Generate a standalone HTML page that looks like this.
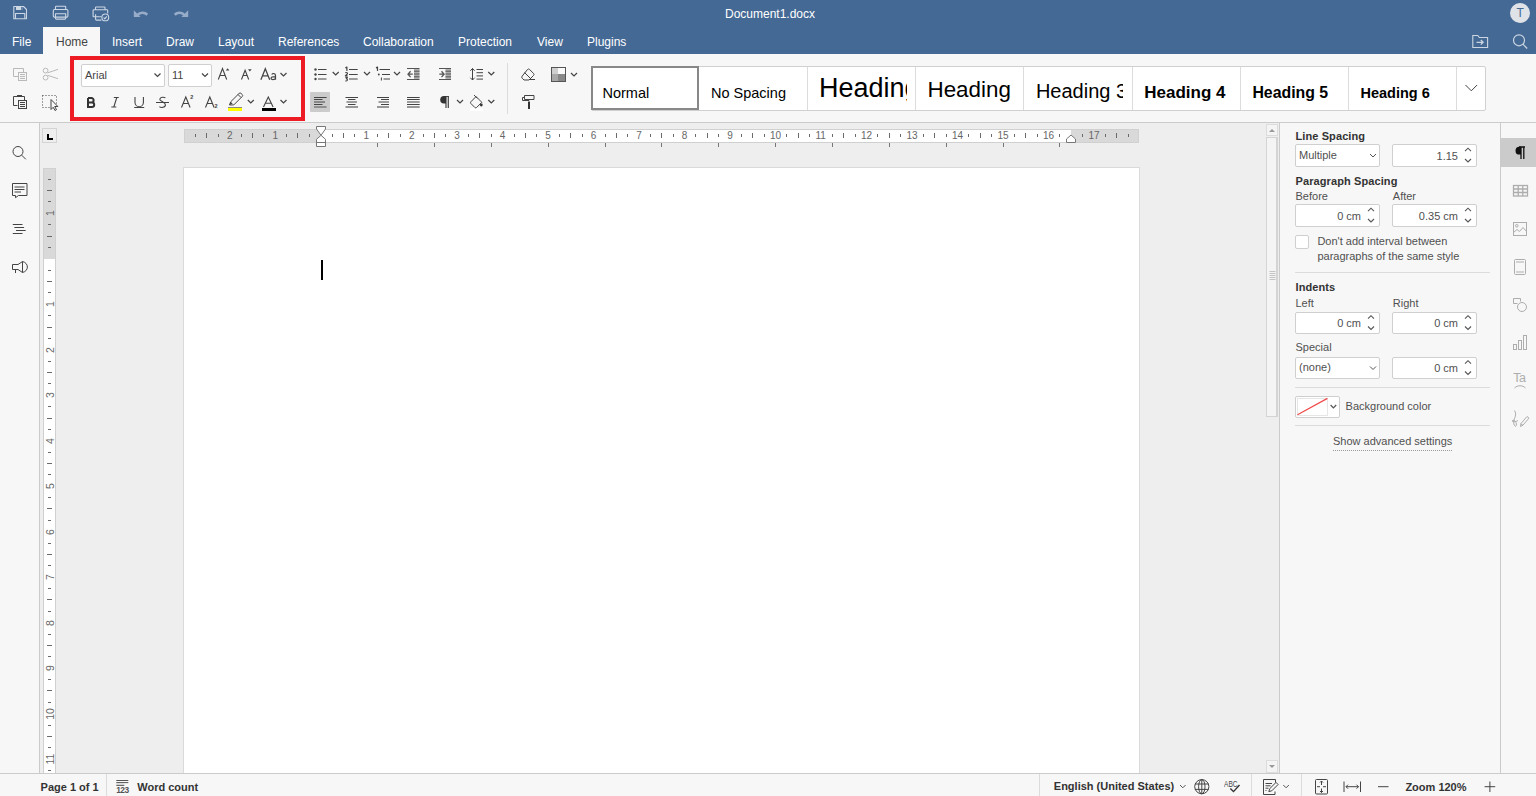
<!DOCTYPE html>
<html><head><meta charset="utf-8">
<style>
*{margin:0;padding:0;box-sizing:border-box}
html,body{width:1536px;height:796px;overflow:hidden;background:#eeeeee;font-family:"Liberation Sans",sans-serif;color:#444}
.a{position:absolute}
.t{position:absolute;white-space:nowrap;line-height:1}
</style></head><body>
<div class="a" style="left:0px;top:0px;width:1536px;height:54px;background:#446995"></div>
<div class="a" style="left:0px;top:54px;width:1536px;height:68px;background:#f7f7f7"></div>
<div class="a" style="left:0px;top:122px;width:1536px;height:1px;background:#cbcbcb"></div>
<div class="a" style="left:0px;top:123px;width:39px;height:650px;background:#f7f7f7"></div>
<div class="a" style="left:39px;top:123px;width:1px;height:650px;background:#cbcbcb"></div>
<div class="a" style="left:1280px;top:123px;width:220px;height:650px;background:#f7f7f7"></div>
<div class="a" style="left:1279px;top:123px;width:1px;height:650px;background:#cbcbcb"></div>
<div class="a" style="left:1501px;top:123px;width:35px;height:650px;background:#f7f7f7"></div>
<div class="a" style="left:1500px;top:123px;width:1px;height:650px;background:#cbcbcb"></div>
<div class="a" style="left:0px;top:774px;width:1536px;height:22px;background:#f7f7f7"></div>
<div class="a" style="left:0px;top:773px;width:1536px;height:1px;background:#cbcbcb"></div>
<div class="t" style="left:725px;top:7.64px;font-size:12px;color:#fff;">Document1.docx</div>
<div class="a" style="left:1510px;top:3px;width:20px;height:20px;background:#dfe3e8;border-radius:50%"></div>
<div class="t" style="left:1516.5px;top:7.34px;font-size:12px;color:#446995;">T</div>
<div class="a" style="left:43px;top:27px;width:57px;height:27px;background:#f7f7f7"></div>
<div class="t" style="left:12px;top:36.24px;font-size:12px;color:#fff;">File</div>
<div class="t" style="left:56px;top:36.24px;font-size:12px;color:#444;">Home</div>
<div class="t" style="left:112px;top:36.24px;font-size:12px;color:#fff;">Insert</div>
<div class="t" style="left:166px;top:36.24px;font-size:12px;color:#fff;">Draw</div>
<div class="t" style="left:218px;top:36.24px;font-size:12px;color:#fff;">Layout</div>
<div class="t" style="left:278px;top:36.24px;font-size:12px;color:#fff;">References</div>
<div class="t" style="left:363px;top:36.24px;font-size:12px;color:#fff;">Collaboration</div>
<div class="t" style="left:458px;top:36.24px;font-size:12px;color:#fff;">Protection</div>
<div class="t" style="left:537px;top:36.24px;font-size:12px;color:#fff;">View</div>
<div class="t" style="left:587px;top:36.24px;font-size:12px;color:#fff;">Plugins</div>
<div class="a" style="left:70px;top:56px;width:235px;height:65px;border:4px solid #ed1c24"></div>
<div class="a" style="left:81px;top:64px;width:84px;height:23px;background:#fff;border:1px solid #cfcfcf;border-radius:2px"></div>
<div class="t" style="left:85px;top:69.69px;font-size:11px;color:#444;">Arial</div>
<div class="a" style="left:168px;top:64px;width:44px;height:23px;background:#fff;border:1px solid #cfcfcf;border-radius:2px"></div>
<div class="t" style="left:172px;top:69.69px;font-size:11px;color:#444;">11</div>
<div class="a" style="left:310px;top:92px;width:20px;height:20px;background:#cbcbcb;border-radius:1px"></div>
<div class="a" style="left:507px;top:63px;width:1px;height:51px;background:#dcdcdc"></div>
<div class="a" style="left:591px;top:66px;width:895px;height:45px;background:#fff;border:1px solid #d0d0d0;border-radius:2px"></div>
<div class="a" style="left:591px;top:66px;width:108px;height:44px;border:2px solid #888"></div>
<div class="a" style="left:807px;top:67px;width:1px;height:43px;background:#dcdcdc"></div>
<div class="a" style="left:915px;top:67px;width:1px;height:43px;background:#dcdcdc"></div>
<div class="a" style="left:1023px;top:67px;width:1px;height:43px;background:#dcdcdc"></div>
<div class="a" style="left:1132px;top:67px;width:1px;height:43px;background:#dcdcdc"></div>
<div class="a" style="left:1240px;top:67px;width:1px;height:43px;background:#dcdcdc"></div>
<div class="a" style="left:1348px;top:67px;width:1px;height:43px;background:#dcdcdc"></div>
<div class="a" style="left:1456px;top:67px;width:1px;height:43px;background:#dcdcdc"></div>
<div class="t" style="left:602.5px;top:85.53px;font-size:14.5px;color:#000;">Normal</div>
<div class="t" style="left:711px;top:85.53px;font-size:14.5px;color:#000;">No Spacing</div>
<div class="a" style="left:808px;top:67px;width:99px;height:42px;overflow:hidden">
<div class="t" style="left:11.0px;top:8.24px;font-size:27px;color:#000;">Heading 1</div>
</div>
<div class="t" style="left:927.5px;top:79.14px;font-size:22.4px;color:#000;">Heading</div>
<div class="a" style="left:1024px;top:67px;width:99px;height:42px;overflow:hidden">
<div class="t" style="left:11.9px;top:13.97px;font-size:20px;color:#000;">Heading 3</div>
</div>
<div class="t" style="left:1144.3px;top:83.51px;font-size:17px;color:#000;font-weight:bold;">Heading 4</div>
<div class="t" style="left:1252.4px;top:85.18px;font-size:15.85px;color:#000;font-weight:bold;">Heading 5</div>
<div class="t" style="left:1360.5px;top:86.13px;font-size:14.5px;color:#000;font-weight:bold;">Heading 6</div>
<div class="t" style="left:190.3px;top:95.04px;font-size:5.5px;color:#444;font-weight:bold;">2</div>
<div class="t" style="left:214.6px;top:103.54px;font-size:5.5px;color:#444;font-weight:bold;">2</div>
<div class="a" style="left:228px;top:108px;width:14px;height:3px;background:#ffff00"></div>
<div class="a" style="left:228px;top:107px;width:14px;height:1px;background:#888"></div>
<div class="a" style="left:262px;top:108px;width:14px;height:3px;background:#000"></div>
<div class="a" style="left:470px;top:108px;width:13px;height:3px;background:#fff"></div>
<div class="a" style="left:551px;top:67px;width:15px;height:15px;border:1px solid #555;background:linear-gradient(#fff,#fff)"></div>
<div class="a" style="left:552px;top:68px;width:6px;height:6px;background:#cfcfcf"></div>
<div class="a" style="left:558px;top:68px;width:7px;height:6px;background:#fafafa"></div>
<div class="a" style="left:552px;top:74px;width:6px;height:7px;background:#a9a9a9"></div>
<div class="a" style="left:558px;top:74px;width:7px;height:7px;background:#888"></div>
<div class="a" style="left:42px;top:128px;width:15px;height:15px;border:1px solid #d4d4d4;background:#eeeeee"></div>
<div class="a" style="left:184px;top:129px;width:955px;height:14px;background:#d9d9d9;border:1px solid #d0d0d0"></div>
<div class="a" style="left:321px;top:130px;width:750px;height:12px;background:#fff"></div>
<div class="t" style="left:226.91999999999996px;top:130.94px;font-size:10px;color:#666;">2</div>
<div class="t" style="left:272.40999999999997px;top:130.94px;font-size:10px;color:#666;">1</div>
<div class="t" style="left:363.39px;top:130.94px;font-size:10px;color:#666;">1</div>
<div class="t" style="left:408.88px;top:130.94px;font-size:10px;color:#666;">2</div>
<div class="t" style="left:454.36999999999995px;top:130.94px;font-size:10px;color:#666;">3</div>
<div class="t" style="left:499.85999999999996px;top:130.94px;font-size:10px;color:#666;">4</div>
<div class="t" style="left:545.35px;top:130.94px;font-size:10px;color:#666;">5</div>
<div class="t" style="left:590.84px;top:130.94px;font-size:10px;color:#666;">6</div>
<div class="t" style="left:636.33px;top:130.94px;font-size:10px;color:#666;">7</div>
<div class="t" style="left:681.82px;top:130.94px;font-size:10px;color:#666;">8</div>
<div class="t" style="left:727.3100000000001px;top:130.94px;font-size:10px;color:#666;">9</div>
<div class="t" style="left:770.0px;top:130.94px;font-size:10px;color:#666;">10</div>
<div class="t" style="left:815.49px;top:130.94px;font-size:10px;color:#666;">11</div>
<div class="t" style="left:860.9799999999999px;top:130.94px;font-size:10px;color:#666;">12</div>
<div class="t" style="left:906.4699999999999px;top:130.94px;font-size:10px;color:#666;">13</div>
<div class="t" style="left:951.9599999999999px;top:130.94px;font-size:10px;color:#666;">14</div>
<div class="t" style="left:997.4499999999999px;top:130.94px;font-size:10px;color:#666;">15</div>
<div class="t" style="left:1042.94px;top:130.94px;font-size:10px;color:#666;">16</div>
<div class="t" style="left:1088.43px;top:130.94px;font-size:10px;color:#666;">17</div>
<div class="a" style="left:43px;top:168px;width:13px;height:605px;background:#fff;border:1px solid #d0d0d0;border-bottom:none"></div>
<div class="a" style="left:44px;top:169px;width:11px;height:90px;background:#d9d9d9"></div>
<div class="t" style="left:40px;top:208.31px;width:20px;height:10px;font-size:10.5px;color:#666;text-align:center;transform:rotate(-90deg)">1</div>
<div class="t" style="left:40px;top:299.29px;width:20px;height:10px;font-size:10.5px;color:#666;text-align:center;transform:rotate(-90deg)">1</div>
<div class="t" style="left:40px;top:344.78px;width:20px;height:10px;font-size:10.5px;color:#666;text-align:center;transform:rotate(-90deg)">2</div>
<div class="t" style="left:40px;top:390.27px;width:20px;height:10px;font-size:10.5px;color:#666;text-align:center;transform:rotate(-90deg)">3</div>
<div class="t" style="left:40px;top:435.76px;width:20px;height:10px;font-size:10.5px;color:#666;text-align:center;transform:rotate(-90deg)">4</div>
<div class="t" style="left:40px;top:481.25px;width:20px;height:10px;font-size:10.5px;color:#666;text-align:center;transform:rotate(-90deg)">5</div>
<div class="t" style="left:40px;top:526.74px;width:20px;height:10px;font-size:10.5px;color:#666;text-align:center;transform:rotate(-90deg)">6</div>
<div class="t" style="left:40px;top:572.23px;width:20px;height:10px;font-size:10.5px;color:#666;text-align:center;transform:rotate(-90deg)">7</div>
<div class="t" style="left:40px;top:617.72px;width:20px;height:10px;font-size:10.5px;color:#666;text-align:center;transform:rotate(-90deg)">8</div>
<div class="t" style="left:40px;top:663.21px;width:20px;height:10px;font-size:10.5px;color:#666;text-align:center;transform:rotate(-90deg)">9</div>
<div class="t" style="left:40px;top:708.70px;width:20px;height:10px;font-size:10.5px;color:#666;text-align:center;transform:rotate(-90deg)">10</div>
<div class="t" style="left:40px;top:754.19px;width:20px;height:10px;font-size:10.5px;color:#666;text-align:center;transform:rotate(-90deg)">11</div>
<div class="a" style="left:183px;top:167px;width:957px;height:606px;background:#fff;border:1px solid #dadada;border-bottom:none"></div>
<div class="a" style="left:321px;top:260px;width:2px;height:20px;background:#000"></div>
<div class="a" style="left:1265px;top:123px;width:13px;height:650px;background:#eeeeee"></div>
<div class="a" style="left:1266px;top:124px;width:12px;height:12px;background:#f4f4f4;border:1px solid #dcdcdc"></div>
<div class="a" style="left:1266px;top:137px;width:12px;height:280px;background:#f4f4f4;border:1px solid #d4d4d4;border-right-width:2px"></div>
<div class="a" style="left:1266px;top:760px;width:12px;height:13px;background:#f4f4f4;border:1px solid #dcdcdc"></div>
<div class="t" style="left:1295.5px;top:130.99px;font-size:11px;color:#333;font-weight:bold;letter-spacing:0.1px">Line Spacing</div>
<div class="a" style="left:1295px;top:144px;width:85px;height:23px;background:#fff;border:1px solid #cfcfcf;border-radius:2px"></div>
<div class="t" style="left:1299px;top:149.99px;font-size:11px;color:#505050;">Multiple</div>
<div class="a" style="left:1392px;top:144px;width:85px;height:23px;background:#fff;border:1px solid #cfcfcf;border-radius:2px"></div>
<div class="t" style="left:1392px;top:150.59px;width:66px;text-align:right;font-size:11px;color:#505050">1.15</div>
<div class="t" style="left:1295.5px;top:175.69px;font-size:11px;color:#333;font-weight:bold;letter-spacing:0.1px">Paragraph Spacing</div>
<div class="t" style="left:1295.5px;top:191.29px;font-size:11px;color:#505050;">Before</div>
<div class="t" style="left:1392.8px;top:191.29px;font-size:11px;color:#505050;">After</div>
<div class="a" style="left:1295px;top:204px;width:85px;height:23px;background:#fff;border:1px solid #cfcfcf;border-radius:2px"></div>
<div class="t" style="left:1295px;top:210.59px;width:66px;text-align:right;font-size:11px;color:#505050">0 cm</div>
<div class="a" style="left:1392px;top:204px;width:85px;height:23px;background:#fff;border:1px solid #cfcfcf;border-radius:2px"></div>
<div class="t" style="left:1392px;top:210.59px;width:66px;text-align:right;font-size:11px;color:#505050">0.35 cm</div>
<div class="a" style="left:1295px;top:235px;width:14px;height:14px;background:#fff;border:1px solid #cfcfcf;border-radius:2px"></div>
<div class="t" style="left:1317.4px;top:235.69px;font-size:11px;color:#505050;">Don't add interval between</div>
<div class="t" style="left:1317.4px;top:251.19px;font-size:11px;color:#505050;">paragraphs of the same style</div>
<div class="a" style="left:1295px;top:272px;width:195px;height:1px;background:#dcdcdc"></div>
<div class="t" style="left:1295.5px;top:282.29px;font-size:11px;color:#333;font-weight:bold;letter-spacing:0.1px">Indents</div>
<div class="t" style="left:1295.5px;top:297.69px;font-size:11px;color:#505050;">Left</div>
<div class="t" style="left:1392.8px;top:297.69px;font-size:11px;color:#505050;">Right</div>
<div class="a" style="left:1295px;top:312px;width:85px;height:22px;background:#fff;border:1px solid #cfcfcf;border-radius:2px"></div>
<div class="t" style="left:1295px;top:317.89px;width:66px;text-align:right;font-size:11px;color:#505050">0 cm</div>
<div class="a" style="left:1392px;top:312px;width:85px;height:22px;background:#fff;border:1px solid #cfcfcf;border-radius:2px"></div>
<div class="t" style="left:1392px;top:317.89px;width:66px;text-align:right;font-size:11px;color:#505050">0 cm</div>
<div class="t" style="left:1295.5px;top:342.19px;font-size:11px;color:#505050;">Special</div>
<div class="a" style="left:1295px;top:357px;width:85px;height:22px;background:#fff;border:1px solid #cfcfcf;border-radius:2px"></div>
<div class="t" style="left:1299px;top:362.39px;font-size:11px;color:#505050;">(none)</div>
<div class="a" style="left:1392px;top:357px;width:85px;height:22px;background:#fff;border:1px solid #cfcfcf;border-radius:2px"></div>
<div class="t" style="left:1392px;top:362.89px;width:66px;text-align:right;font-size:11px;color:#505050">0 cm</div>
<div class="a" style="left:1295px;top:387px;width:195px;height:1px;background:#dcdcdc"></div>
<div class="a" style="left:1295px;top:396px;width:45px;height:22px;background:#fff;border:1px solid #cfcfcf;border-radius:2px"></div>
<div class="a" style="left:1297px;top:398px;width:31px;height:18px;border:1px solid #e6e6e6"></div>
<div class="t" style="left:1345.6px;top:400.89px;font-size:11px;color:#505050;">Background color</div>
<div class="a" style="left:1295px;top:425px;width:195px;height:1px;background:#dcdcdc"></div>
<div class="t" style="left:1333px;top:436.29px;font-size:11px;color:#505050;">Show advanced settings</div>
<div class="a" style="left:1501px;top:138px;width:35px;height:29px;background:#cbcbcb"></div>
<div class="t" style="left:1513.3px;top:372.02px;font-size:12.5px;color:#adadad;letter-spacing:-0.5px">Ta</div>
<div class="t" style="left:40.6px;top:781.69px;font-size:11px;color:#333;font-weight:bold;">Page 1 of 1</div>
<div class="a" style="left:106px;top:774px;width:1px;height:22px;background:#dcdcdc"></div>
<div class="t" style="left:116.2px;top:786.09px;font-size:8.4px;color:#555;font-weight:bold;letter-spacing:-0.5px">123</div>
<div class="t" style="left:137.3px;top:781.69px;font-size:11px;color:#333;font-weight:bold;">Word count</div>
<div class="a" style="left:1039px;top:774px;width:1px;height:22px;background:#dcdcdc"></div>
<div class="t" style="left:1053.8px;top:781.49px;font-size:11px;color:#333;font-weight:bold;">English (United States)</div>
<div class="t" style="left:1224.4px;top:780.00px;font-size:8.5px;color:#444;transform:scaleX(0.78);transform-origin:0 0">ABC</div>
<div class="a" style="left:1251px;top:774px;width:1px;height:22px;background:#dcdcdc"></div>
<div class="a" style="left:1301px;top:774px;width:1px;height:22px;background:#dcdcdc"></div>
<div class="t" style="left:1405.4px;top:781.59px;font-size:11px;color:#333;font-weight:bold;">Zoom 120%</div>
<svg width="1536" height="796" viewBox="0 0 1536 796" style="left:0;top:0;position:absolute" fill="none" stroke-linecap="butt"><g stroke="#cdd8e5" stroke-width="1.1" stroke-linejoin="round"><path d="M13.8 6.5h9.7l3 3v9.3h-12.7z"/><path d="M15.5 18.8v-5.3h9.3v5.3"/></g><rect x="16" y="6.6" width="5" height="3.4" fill="#cdd8e5"/><rect x="21.5" y="6.6" width="1" height="3.4" fill="#cdd8e5" opacity="0.5"/><g stroke="#cdd8e5" stroke-width="1.1" stroke-linejoin="round"><path d="M55.5 9.5v-2.4a.8 .8 0 0 1 .8-.8h8.6a.8 .8 0 0 1 .8.8v2.4"/><rect x="53.3" y="9.5" width="14.6" height="7.6" rx="1.2"/><path d="M55.5 18.3v-4.5h10.2v4.5a.8 .8 0 0 1-.8.8h-8.6a.8 .8 0 0 1-.8-.8z"/></g><g stroke="#cdd8e5" stroke-width="1.1" stroke-linejoin="round"><path d="M95.5 10v-2.3a.7 .7 0 0 1 .7-.7h8.1a.7 .7 0 0 1 .7.7v2.3"/><path d="M101.5 16.8h-7.8a.6 .6 0 0 1-.6-.6v-5.6a.8 .8 0 0 1 .8-.8h13a.8 .8 0 0 1 .8.8v3"/><path d="M95.6 14.3v5a.8 .8 0 0 0 .8.8h5"/><circle cx="105.3" cy="17.4" r="3.4"/><path d="M103.6 17.5l1.2 1.3l2-2.4"/></g><path d="M137.5 15.2c2.5-3 7-3.2 9.8-.5" stroke="#97acc8" stroke-width="2.6"/><path d="M133.8 10.2v6.8h6.8z" fill="#97acc8"/><path d="M184.5 15.2c-2.5-3 -7-3.2 -9.8-.5" stroke="#97acc8" stroke-width="2.6"/><path d="M188.2 10.2v6.8h-6.8z" fill="#97acc8"/><g stroke="#ccd6e2" stroke-width="1.1"><path d="M1472.8 35.5h5l1.5 2h8.3v10h-14.8z"/><path d="M1476.5 42.3h6.5M1480.8 40l2.3 2.3l-2.3 2.3" stroke-width="1.3"/></g><g stroke="#ccd6e2" stroke-width="1.2"><circle cx="1519" cy="40.3" r="5.5"/><path d="M1522.9 44.2l4.3 4.3"/></g><g stroke="#b9b9b9"><path d="M18 76.5h-4.5v-8h10v3.5"/><rect x="18.5" y="72.5" width="8" height="8"/><path d="M20 74.5h5M20 76.5h5M20 78.5h5"/></g><g stroke="#b9b9b9"><circle cx="45.6" cy="70.6" r="2.4"/><circle cx="45.6" cy="77.6" r="2.4"/><path d="M47.6 72.9L58 69.3M47.6 75.3L58 78.7"/></g><g stroke="#444"><path d="M17.5 105.5h-4v-9h11v3.5"/><rect x="18.5" y="100.5" width="8" height="8"/><path d="M20 102.5h5M20 104.5h5M20 106.5h5"/></g><rect x="17" y="95" width="5" height="2" fill="#444"/><rect x="42.5" y="95.5" width="14" height="12" stroke="#444" stroke-dasharray="1 2"/><path d="M51 99.5v10l2.2-2.2l1.8 3.2l1.5-.8l-1.8-3.2h3.2z" fill="#f7f7f7" stroke="#444" stroke-linejoin="round"/><path d="M154.5 73.5l3.0 3.0l3.0 -3.0" stroke="#444" stroke-width="1.2"/><path d="M202 73.5l3.0 3.0l3.0 -3.0" stroke="#444" stroke-width="1.2"/><g stroke="#444" stroke-width="1.1"><path d="M218.3 79.5l4.2-11l4.2 11M219.8 75.5h5.4"/></g><path d="M225.8 70.6l1.8-2.4l1.8 2.4z" fill="#444"/><g stroke="#444" stroke-width="1.1"><path d="M241.5 79.5l3.6-9.2l3.6 9.2M242.8 75.5h4.6"/></g><path d="M248 69.3h3.7l-1.85 2.2z" fill="#444"/><g stroke="#444" stroke-width="1.25"><path d="M260.9 79.8l4.4-11l4.4 11M262.4 75.8h5.8"/></g><g stroke="#444" stroke-width="1.2"><path d="M271.8 74.6c.6-1.5 3.7-1.6 3.7.8v4.4M275.5 76.7c-1.2 0-4.4 0-4.4 1.6c0 1.9 3.6 1.8 4.4-.1"/></g><path d="M280.5 73l3.0 3.0l3.0 -3.0" stroke="#444" stroke-width="1.2"/><path d="M88 98h3.4a2.2 2.2 0 0 1 0 4.4H88M88 102.4h3.9a2.3 2.3 0 0 1 0 4.6H88V98" stroke="#333" stroke-width="2"/><path d="M113.8 97.5h5M111.3 107h5M116.8 97.5L113.8 107" stroke="#444" stroke-width="1.1"/><path d="M135 97v5.5a4.2 4.2 0 0 0 8.4 0V97M134.2 107.5h10" stroke="#444" stroke-width="1.1"/><path d="M165.4 97.8c-1.5-.8-5-1-5.6 1.3c-.6 2.2 5.5 2.6 5.6 5.6c.1 3-4.5 3.3-6 2" stroke="#444" stroke-width="1.1"/><path d="M156 102.5h13" stroke="#444"/><g stroke="#444" stroke-width="1.1"><path d="M181.5 107.5l4.3-10.5l4.3 10.5M183.2 103.5h5.2"/><path d="M205.5 107.5l4.3-10.5l4.3 10.5M207.2 103.5h5.2"/></g><path d="M229.5 105l1.2-3.2l8.3-8.3a1.5 1.5 0 0 1 2.2 0l.9.9a1.5 1.5 0 0 1 0 2.2l-8.3 8.3z M238 94.5l3 3" stroke="#444" stroke-linejoin="round"/><path d="M229.5 105l1.2-3.2l2 2z" fill="#444"/><path d="M247.8 100l3.0 3.0l3.0 -3.0" stroke="#444" stroke-width="1.2"/><g stroke="#444" stroke-width="1.1"><path d="M263.5 107l4.8-10l4.8 10M265.5 103.3h5.6"/></g><path d="M280.5 100l3.0 3.0l3.0 -3.0" stroke="#444" stroke-width="1.2"/><circle cx="315.5" cy="69.5" r="1.2" fill="#444"/><path d="M318 69.5h8.5" stroke="#444"/><circle cx="315.5" cy="74.5" r="1.2" fill="#444"/><path d="M318 74.5h8.5" stroke="#444"/><circle cx="315.5" cy="79" r="1.2" fill="#444"/><path d="M318 79h8.5" stroke="#444"/><path d="M332.7 72l3.0 3.0l3.0 -3.0" stroke="#444" stroke-width="1.2"/><path d="M349 69.5h8.7" stroke="#444"/><path d="M349 74.5h8.7" stroke="#444"/><path d="M349 79h8.7" stroke="#444"/><g stroke="#444" stroke-width="1.2" stroke-linejoin="round"><path d="M345.4 67.9l1.5-.8v3.9"/><path d="M345.4 73c.4-.7 2.1-.8 2.1.4c0 .9-1.5 1.4-2.1 2.5h2.2"/><path d="M345.4 77.4h2l-1.1 1.3c1.4 0 1.6 2.3-.2 2.3h-.8"/></g><path d="M364 72l3.0 3.0l3.0 -3.0" stroke="#444" stroke-width="1.2"/><path d="M379.5 69.5h10.5M382 74.5h8M383.5 79h6.5" stroke="#444"/><circle cx="378.8" cy="74.5" r="0.9" fill="#444"/><path d="M381.4 77.5v3" stroke="#444"/><path d="M376 67.9l1.5-.8v3.9" stroke="#444" stroke-width="1.2" stroke-linejoin="round"/><path d="M394 72l3.0 3.0l3.0 -3.0" stroke="#444" stroke-width="1.2"/><rect x="414" y="69" width="5.5" height="10" fill="#b0b0b0"/><path d="M414 71.2h5.5M414 74h5.5M414 76.8h5.5" stroke="#555"/><path d="M407 68.5h12.5M407 79.5h12.5" stroke="#555"/><path d="M408 74.2h4.8M410.6 71.3L408 74.2l2.6 2.9" stroke="#555" stroke-width="1.3"/><rect x="445.5" y="69" width="5.5" height="10" fill="#b0b0b0"/><path d="M445.5 71.2h5.5M445.5 74h5.5M445.5 76.8h5.5" stroke="#555"/><path d="M439.0 68.5h12.0M439.0 79.5h12.0" stroke="#555"/><path d="M439.3 74.2h4.8M441.5 71.3l2.6 2.9l-2.6 2.9" stroke="#555" stroke-width="1.3"/><g stroke="#444"><path d="M472.5 68.5v11.5M470.3 70.8l2.2-2.3l2.2 2.3M470.3 77.7l2.2 2.3l2.2-2.3M476.5 69.5h6.5M476.5 72.7h6.5M476.5 75.9h6.5M476.5 79.1h6.5"/></g><path d="M488.3 72l3.0 3.0l3.0 -3.0" stroke="#444" stroke-width="1.2"/><path d="M314 97.5h12.600000000000023" stroke="#444"/><path d="M314 99.5h8.5" stroke="#444"/><path d="M314 102h11" stroke="#444"/><path d="M314 104.5h8.5" stroke="#444"/><path d="M314 107h12.600000000000023" stroke="#808080" stroke-width="1.6"/><path d="M345.5 97.5h12.5" stroke="#444"/><path d="M348 99.5h7.5" stroke="#444"/><path d="M346.5 102h10.5" stroke="#444"/><path d="M348 104.5h7.5" stroke="#444"/><path d="M345.5 107h12.5" stroke="#808080" stroke-width="1.6"/><path d="M377 97.5h12" stroke="#444"/><path d="M381 99.5h8" stroke="#444"/><path d="M378.5 102h10.5" stroke="#444"/><path d="M381 104.5h8" stroke="#444"/><path d="M377 107h12" stroke="#808080" stroke-width="1.6"/><path d="M407 97.5h12.699999999999989" stroke="#444"/><path d="M407 99.5h12.699999999999989" stroke="#444"/><path d="M407 102h12.699999999999989" stroke="#444"/><path d="M407 104.5h12.699999999999989" stroke="#444"/><path d="M407 107h12.699999999999989" stroke="#808080" stroke-width="1.6"/><path d="M446 96.5h3M446 96v12M448.3 96v12" stroke="#444" stroke-width="1.2"/><path d="M446 96h-2a3.8 3.8 0 0 0 0 7.6h2z" fill="#333"/><path d="M457 100l3.0 3.0l3.0 -3.0" stroke="#444" stroke-width="1.2"/><path d="M476 96.5l5.8 5.8l-5.2 5.2a1.2 1.2 0 0 1-1.7 0l-4-4a1.2 1.2 0 0 1 0-1.7z M474 95l3.3 3.3" stroke="#444" stroke-linejoin="round"/><circle cx="481.3" cy="105" r="1.4" fill="#333"/><path d="M488.3 100l3.0 3.0l3.0 -3.0" stroke="#444" stroke-width="1.2"/><path d="M527.5 69.5a1.5 1.5 0 0 1 2.1 0l3.9 3.9a1.5 1.5 0 0 1 0 2.1l-4.5 4.5h-5l-1.8-1.8a1.5 1.5 0 0 1 0-2.1z M524.5 72.5l6 6M529 79.5h6" stroke="#444" stroke-linejoin="round"/><path d="M571 73l3.0 3.0l3.0 -3.0" stroke="#444" stroke-width="1.2"/><path d="M524.5 95.5h9.5v4h-9.5z M524.5 97.5h-2v3h6.5v1.5" stroke="#444"/><rect x="528" y="102" width="2" height="7" fill="#333"/><path d="M1465.5 85l5.8 5.8l5.8-5.8" stroke="#444"/><path d="M48 134v5h5" stroke="#000" stroke-width="2"/><rect x="195" y="134" width="1" height="3" fill="#6a6a6a"/><rect x="206" y="133" width="1" height="5" fill="#6a6a6a"/><rect x="218" y="134" width="1" height="3" fill="#6a6a6a"/><rect x="241" y="134" width="1" height="3" fill="#6a6a6a"/><rect x="252" y="133" width="1" height="5" fill="#6a6a6a"/><rect x="263" y="134" width="1" height="3" fill="#6a6a6a"/><rect x="286" y="134" width="1" height="3" fill="#6a6a6a"/><rect x="297" y="133" width="1" height="5" fill="#6a6a6a"/><rect x="309" y="134" width="1" height="3" fill="#6a6a6a"/><rect x="332" y="134" width="1" height="3" fill="#6a6a6a"/><rect x="343" y="133" width="1" height="5" fill="#6a6a6a"/><rect x="354" y="134" width="1" height="3" fill="#6a6a6a"/><rect x="377" y="134" width="1" height="3" fill="#6a6a6a"/><rect x="388" y="133" width="1" height="5" fill="#6a6a6a"/><rect x="400" y="134" width="1" height="3" fill="#6a6a6a"/><rect x="423" y="134" width="1" height="3" fill="#6a6a6a"/><rect x="434" y="133" width="1" height="5" fill="#6a6a6a"/><rect x="445" y="134" width="1" height="3" fill="#6a6a6a"/><rect x="468" y="134" width="1" height="3" fill="#6a6a6a"/><rect x="479" y="133" width="1" height="5" fill="#6a6a6a"/><rect x="491" y="134" width="1" height="3" fill="#6a6a6a"/><rect x="514" y="134" width="1" height="3" fill="#6a6a6a"/><rect x="525" y="133" width="1" height="5" fill="#6a6a6a"/><rect x="536" y="134" width="1" height="3" fill="#6a6a6a"/><rect x="559" y="134" width="1" height="3" fill="#6a6a6a"/><rect x="570" y="133" width="1" height="5" fill="#6a6a6a"/><rect x="582" y="134" width="1" height="3" fill="#6a6a6a"/><rect x="605" y="134" width="1" height="3" fill="#6a6a6a"/><rect x="616" y="133" width="1" height="5" fill="#6a6a6a"/><rect x="627" y="134" width="1" height="3" fill="#6a6a6a"/><rect x="650" y="134" width="1" height="3" fill="#6a6a6a"/><rect x="661" y="133" width="1" height="5" fill="#6a6a6a"/><rect x="673" y="134" width="1" height="3" fill="#6a6a6a"/><rect x="695" y="134" width="1" height="3" fill="#6a6a6a"/><rect x="707" y="133" width="1" height="5" fill="#6a6a6a"/><rect x="718" y="134" width="1" height="3" fill="#6a6a6a"/><rect x="741" y="134" width="1" height="3" fill="#6a6a6a"/><rect x="752" y="133" width="1" height="5" fill="#6a6a6a"/><rect x="764" y="134" width="1" height="3" fill="#6a6a6a"/><rect x="786" y="134" width="1" height="3" fill="#6a6a6a"/><rect x="798" y="133" width="1" height="5" fill="#6a6a6a"/><rect x="809" y="134" width="1" height="3" fill="#6a6a6a"/><rect x="832" y="134" width="1" height="3" fill="#6a6a6a"/><rect x="843" y="133" width="1" height="5" fill="#6a6a6a"/><rect x="855" y="134" width="1" height="3" fill="#6a6a6a"/><rect x="877" y="134" width="1" height="3" fill="#6a6a6a"/><rect x="889" y="133" width="1" height="5" fill="#6a6a6a"/><rect x="900" y="134" width="1" height="3" fill="#6a6a6a"/><rect x="923" y="134" width="1" height="3" fill="#6a6a6a"/><rect x="934" y="133" width="1" height="5" fill="#6a6a6a"/><rect x="946" y="134" width="1" height="3" fill="#6a6a6a"/><rect x="968" y="134" width="1" height="3" fill="#6a6a6a"/><rect x="980" y="133" width="1" height="5" fill="#6a6a6a"/><rect x="991" y="134" width="1" height="3" fill="#6a6a6a"/><rect x="1014" y="134" width="1" height="3" fill="#6a6a6a"/><rect x="1025" y="133" width="1" height="5" fill="#6a6a6a"/><rect x="1037" y="134" width="1" height="3" fill="#6a6a6a"/><rect x="1059" y="134" width="1" height="3" fill="#6a6a6a"/><rect x="1082" y="134" width="1" height="3" fill="#6a6a6a"/><rect x="1105" y="134" width="1" height="3" fill="#6a6a6a"/><rect x="1116" y="133" width="1" height="5" fill="#6a6a6a"/><rect x="1128" y="134" width="1" height="3" fill="#6a6a6a"/><rect x="377" y="143" width="1" height="4" fill="#777"/><rect x="434" y="143" width="1" height="4" fill="#777"/><rect x="491" y="143" width="1" height="4" fill="#777"/><rect x="548" y="143" width="1" height="4" fill="#777"/><rect x="605" y="143" width="1" height="4" fill="#777"/><rect x="661" y="143" width="1" height="4" fill="#777"/><rect x="718" y="143" width="1" height="4" fill="#777"/><rect x="775" y="143" width="1" height="4" fill="#777"/><rect x="832" y="143" width="1" height="4" fill="#777"/><rect x="889" y="143" width="1" height="4" fill="#777"/><rect x="946" y="143" width="1" height="4" fill="#777"/><rect x="1003" y="143" width="1" height="4" fill="#777"/><rect x="1059" y="143" width="1" height="4" fill="#777"/><path d="M316.5 126.5h9v2.5l-4.5 6.3l-4.5-6.3z" fill="#fff" stroke="#777" stroke-linejoin="round"/><path d="M321 135.3l4.5 4v7.2h-9v-7.2z M316.5 142.5h9" fill="#fff" stroke="#777" stroke-linejoin="round"/><path d="M1066.5 142.5v-3.5l4.5-4l4.5 4v3.5z" fill="#fff" stroke="#777" stroke-linejoin="round"/><rect x="48" y="179" width="3" height="1" fill="#6a6a6a"/><rect x="47" y="190" width="5" height="1" fill="#6a6a6a"/><rect x="48" y="201" width="3" height="1" fill="#6a6a6a"/><rect x="48" y="224" width="3" height="1" fill="#6a6a6a"/><rect x="47" y="236" width="5" height="1" fill="#6a6a6a"/><rect x="48" y="247" width="3" height="1" fill="#6a6a6a"/><rect x="48" y="270" width="3" height="1" fill="#6a6a6a"/><rect x="47" y="281" width="5" height="1" fill="#6a6a6a"/><rect x="48" y="292" width="3" height="1" fill="#6a6a6a"/><rect x="48" y="315" width="3" height="1" fill="#6a6a6a"/><rect x="47" y="327" width="5" height="1" fill="#6a6a6a"/><rect x="48" y="338" width="3" height="1" fill="#6a6a6a"/><rect x="48" y="361" width="3" height="1" fill="#6a6a6a"/><rect x="47" y="372" width="5" height="1" fill="#6a6a6a"/><rect x="48" y="383" width="3" height="1" fill="#6a6a6a"/><rect x="48" y="406" width="3" height="1" fill="#6a6a6a"/><rect x="47" y="418" width="5" height="1" fill="#6a6a6a"/><rect x="48" y="429" width="3" height="1" fill="#6a6a6a"/><rect x="48" y="452" width="3" height="1" fill="#6a6a6a"/><rect x="47" y="463" width="5" height="1" fill="#6a6a6a"/><rect x="48" y="474" width="3" height="1" fill="#6a6a6a"/><rect x="48" y="497" width="3" height="1" fill="#6a6a6a"/><rect x="47" y="508" width="5" height="1" fill="#6a6a6a"/><rect x="48" y="520" width="3" height="1" fill="#6a6a6a"/><rect x="48" y="543" width="3" height="1" fill="#6a6a6a"/><rect x="47" y="554" width="5" height="1" fill="#6a6a6a"/><rect x="48" y="565" width="3" height="1" fill="#6a6a6a"/><rect x="48" y="588" width="3" height="1" fill="#6a6a6a"/><rect x="47" y="599" width="5" height="1" fill="#6a6a6a"/><rect x="48" y="611" width="3" height="1" fill="#6a6a6a"/><rect x="48" y="634" width="3" height="1" fill="#6a6a6a"/><rect x="47" y="645" width="5" height="1" fill="#6a6a6a"/><rect x="48" y="656" width="3" height="1" fill="#6a6a6a"/><rect x="48" y="679" width="3" height="1" fill="#6a6a6a"/><rect x="47" y="690" width="5" height="1" fill="#6a6a6a"/><rect x="48" y="702" width="3" height="1" fill="#6a6a6a"/><rect x="48" y="725" width="3" height="1" fill="#6a6a6a"/><rect x="47" y="736" width="5" height="1" fill="#6a6a6a"/><rect x="48" y="747" width="3" height="1" fill="#6a6a6a"/><rect x="48" y="770" width="3" height="1" fill="#6a6a6a"/><path d="M1269 132h6l-3-3z" fill="#999"/><path d="M1269.5 271.5h6M1269.5 273.5h6M1269.5 275.5h6M1269.5 277.5h6M1269.5 279.5h6" stroke="#c4c4c4"/><path d="M1269 765h6l-3 3z" fill="#999"/><g stroke="#444"><circle cx="18" cy="151.5" r="5"/><path d="M21.6 155.1l4.2 4.2"/></g><g stroke="#444"><path d="M12.5 183.5h14.5v12h-8.5l-3 2.2v-2.2h-3z" stroke-linejoin="round"/><path d="M14.5 187h10M14.5 189.5h10M14.5 192h6.5"/></g><g stroke="#444"><path d="M12.8 224.5h9.7M14.4 227.5h9.7M16 230.5h9.7M12.8 233.5h9.7"/></g><g stroke="#444"><path d="M12.5 264.5h5.5l4.5-3v11l-4.5-3h-5.5z M15.5 269.5v3.5 M22.5 261.5c6.5 1.5 6.5 9.5 0 11"/></g><path d="M1370 154.0l3 3l3-3" stroke="#555"/><path d="M1465 151.2l3-3l3 3M1465 159.0l3 3l3-3" stroke="#555" stroke-width="1.1"/><path d="M1368 211.2l3-3l3 3M1368 219.0l3 3l3-3" stroke="#555" stroke-width="1.1"/><path d="M1465 211.2l3-3l3 3M1465 219.0l3 3l3-3" stroke="#555" stroke-width="1.1"/><path d="M1368 318.7l3-3l3 3M1368 326.5l3 3l3-3" stroke="#555" stroke-width="1.1"/><path d="M1465 318.7l3-3l3 3M1465 326.5l3 3l3-3" stroke="#555" stroke-width="1.1"/><path d="M1370 366.5l3 3l3-3" stroke="#555"/><path d="M1465 363.7l3-3l3 3M1465 371.5l3 3l3-3" stroke="#555" stroke-width="1.1"/><path d="M1297.5 414.8L1327.4 398.4" stroke="#f04848" stroke-width="1.2"/><path d="M1330.6 405l2.8 2.8l2.8-2.8" stroke="#555" stroke-width="1.2"/><path d="M1333 450.5h119.5" stroke="#999" stroke-dasharray="1 1"/><path d="M1521 147v12M1523.8 147v12M1519 147h6" stroke="#111" stroke-width="1.3"/><path d="M1521 146.8h-1.6a3.9 3.9 0 0 0 0 7.8h1.6z" fill="#111"/><g stroke="#adadad" stroke-width="1.3"><rect x="1513.5" y="185.5" width="14" height="10.5"/><path d="M1513.5 189h14M1513.5 192.5h14M1518.2 185.5v10.5M1522.8 185.5v10.5"/></g><g stroke="#adadad"><rect x="1513.5" y="222.5" width="13" height="13"/><circle cx="1516.8" cy="225.8" r="1.3"/><path d="M1513.5 232.5l3.5-3l2.5 2l3.5-4l3.5 4"/></g><g stroke="#adadad"><rect x="1514.5" y="259.5" width="11" height="15" rx="1"/><path d="M1516 262h8M1516 272h8"/></g><g stroke="#adadad"><path d="M1517.5 303.5h-4v-5h7v3"/><circle cx="1522" cy="307" r="4.5"/></g><g stroke="#adadad"><rect x="1513.5" y="344.5" width="3" height="5"/><rect x="1518.5" y="340.5" width="3" height="9"/><rect x="1523.5" y="335.5" width="3" height="14"/></g><path d="M1514.5 388c3-3 8-3 11 0" stroke="#adadad"/><g stroke="#adadad" stroke-linejoin="round"><path d="M1514.5 410.5c1.5 2 1.5 5 0 8c-1.5 3-1 7 1 8c1.5-1 1-4-.5-5.5c-1-1-2.5-1-3 0c1.5 1 4 1 6-.5"/><path d="M1520.5 426.5l.5-3l6-7l2 1.6l-6 7z M1520.8 423.8l2.2 1.6"/></g><path d="M116.3 780.5h12M116.3 782.6h12" stroke="#555"/><path d="M116.3 784h8" stroke="#ccc"/><path d="M116.3 785.4h8" stroke="#555"/><path d="M1180 785l2.8 2.8l2.8-2.8" stroke="#555"/><g stroke="#444"><circle cx="1201.8" cy="786.7" r="7.1"/><ellipse cx="1201.8" cy="786.7" rx="3.2" ry="7.1"/><path d="M1201.8 779.6v14.2M1195 784h13.6M1195 789.4h13.6"/></g><path d="M1230.3 788.6l3.2 3l6-6.6" stroke="#333" stroke-width="1.4"/><g stroke="#444"><path d="M1275.5 782.5v-3h-12v15h11.5v-3"/><path d="M1265.5 783.5h6.5M1265.5 785.8h5M1265.5 788.2h3M1265.5 790.5h1"/><path d="M1268.8 791.6l.9-2.9l6.3-6.3l2.1 2.1l-6.3 6.3z" stroke-linejoin="round"/></g><path d="M1283.3 785l2.8 2.8l2.8-2.8" stroke="#555"/><g stroke="#444"><rect x="1315.5" y="779.5" width="12" height="14.5" rx="1"/><path d="M1321.5 781v4M1320 782.5l1.5-1.5l1.5 1.5M1321.5 792.5v-4M1320 791l1.5 1.5l1.5-1.5M1317 786.7h3M1323 786.7h3"/></g><g stroke="#444"><path d="M1344 781.5v10.5M1360.5 781.5v10.5M1346 786.7h12.5M1348 784.7l-2 2l2 2M1356.5 784.7l2 2l-2 2"/></g><path d="M1378 786.7h10.5" stroke="#444"/><path d="M1484.6 786.7h10.6M1489.9 781.5v10.5" stroke="#444"/></svg>
</body></html>
